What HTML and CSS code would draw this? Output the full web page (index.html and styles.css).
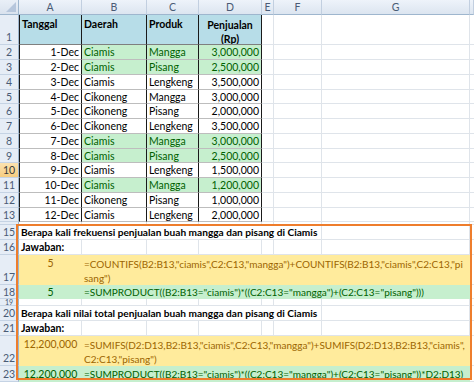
FILE: index.html
```html
<!DOCTYPE html>
<html>
<head>
<meta charset="utf-8">
<link rel="stylesheet" href="styles.css">
</head>
<body>
<div class="sheet">
  <div class="row hdr">
    <div class="corner"><span class="tri"></span></div>
    <div class="ch">A</div><div class="ch">B</div><div class="ch">C</div><div class="ch">D</div><div class="ch">E</div><div class="ch">F</div><div class="ch">G</div><div class="ch"></div>
  </div>

  <div class="row h30">
    <div class="rh bot">1</div>
    <div class="cell tb ta th bold top">Tanggal</div>
    <div class="cell tb th bold top">Daerah</div>
    <div class="cell tb th bold top">Produk</div>
    <div class="cell tb th bold top center wrap">Penjualan<br>(Rp)</div>
    <div class="cell"></div><div class="cell"></div><div class="cell"></div><div class="cell"></div>
  </div>

  <div class="row h15">
    <div class="rh">2</div>
    <div class="cell tb ta right">1-Dec</div><div class="cell tb good">Ciamis</div><div class="cell tb good">Mangga</div><div class="cell tb good right">3,000,000</div>
    <div class="cell"></div><div class="cell"></div><div class="cell"></div><div class="cell"></div>
  </div>
  <div class="row h15">
    <div class="rh">3</div>
    <div class="cell tb ta right">2-Dec</div><div class="cell tb good">Ciamis</div><div class="cell tb good">Pisang</div><div class="cell tb good right">2,500,000</div>
    <div class="cell"></div><div class="cell"></div><div class="cell"></div><div class="cell"></div>
  </div>
  <div class="row h15">
    <div class="rh">4</div>
    <div class="cell tb ta right">3-Dec</div><div class="cell tb">Ciamis</div><div class="cell tb">Lengkeng</div><div class="cell tb right">3,500,000</div>
    <div class="cell"></div><div class="cell"></div><div class="cell"></div><div class="cell"></div>
  </div>
  <div class="row h14">
    <div class="rh">5</div>
    <div class="cell tb ta right">4-Dec</div><div class="cell tb">Cikoneng</div><div class="cell tb">Mangga</div><div class="cell tb right">3,000,000</div>
    <div class="cell"></div><div class="cell"></div><div class="cell"></div><div class="cell"></div>
  </div>
  <div class="row h15">
    <div class="rh">6</div>
    <div class="cell tb ta right">5-Dec</div><div class="cell tb">Cikoneng</div><div class="cell tb">Pisang</div><div class="cell tb right">2,000,000</div>
    <div class="cell"></div><div class="cell"></div><div class="cell"></div><div class="cell"></div>
  </div>
  <div class="row h15">
    <div class="rh">7</div>
    <div class="cell tb ta right">6-Dec</div><div class="cell tb">Cikoneng</div><div class="cell tb">Lengkeng</div><div class="cell tb right">3,500,000</div>
    <div class="cell"></div><div class="cell"></div><div class="cell"></div><div class="cell"></div>
  </div>
  <div class="row h15">
    <div class="rh">8</div>
    <div class="cell tb ta right">7-Dec</div><div class="cell tb good">Ciamis</div><div class="cell tb good">Mangga</div><div class="cell tb good right">3,000,000</div>
    <div class="cell"></div><div class="cell"></div><div class="cell"></div><div class="cell"></div>
  </div>
  <div class="row h14">
    <div class="rh">9</div>
    <div class="cell tb ta right">8-Dec</div><div class="cell tb good">Ciamis</div><div class="cell tb good">Pisang</div><div class="cell tb good right">2,500,000</div>
    <div class="cell"></div><div class="cell"></div><div class="cell"></div><div class="cell"></div>
  </div>
  <div class="row h15">
    <div class="rh active">10</div>
    <div class="cell tb ta right">9-Dec</div><div class="cell tb">Ciamis</div><div class="cell tb">Lengkeng</div><div class="cell tb right">1,500,000</div>
    <div class="cell"></div><div class="cell"></div><div class="cell"></div><div class="cell"></div>
  </div>
  <div class="row h15">
    <div class="rh">11</div>
    <div class="cell tb ta right">10-Dec</div><div class="cell tb good">Ciamis</div><div class="cell tb good">Mangga</div><div class="cell tb good right">1,200,000</div>
    <div class="cell"></div><div class="cell"></div><div class="cell"></div><div class="cell"></div>
  </div>
  <div class="row h15">
    <div class="rh">12</div>
    <div class="cell tb ta right">11-Dec</div><div class="cell tb">Cikoneng</div><div class="cell tb">Pisang</div><div class="cell tb right">1,000,000</div>
    <div class="cell"></div><div class="cell"></div><div class="cell"></div><div class="cell"></div>
  </div>
  <div class="row h14">
    <div class="rh">13</div>
    <div class="cell tb ta right">12-Dec</div><div class="cell tb">Ciamis</div><div class="cell tb">Lengkeng</div><div class="cell tb right">2,000,000</div>
    <div class="cell"></div><div class="cell"></div><div class="cell"></div><div class="cell"></div>
  </div>

  <div class="row h3">
    <div class="rh"></div>
    <div class="cell"></div><div class="cell"></div><div class="cell"></div><div class="cell"></div><div class="cell"></div><div class="cell"></div><div class="cell"></div><div class="cell"></div>
  </div>

  <div class="row h15">
    <div class="rh">15</div>
    <div class="cell span-af bold title">Berapa kali frekuensi penjualan buah mangga dan pisang di Ciamis</div>
    <div class="cell"></div><div class="cell"></div>
  </div>
  <div class="row h15">
    <div class="rh">16</div>
    <div class="cell bold">Jawaban:</div>
    <div class="cell"></div><div class="cell"></div><div class="cell"></div><div class="cell"></div><div class="cell"></div><div class="cell"></div><div class="cell"></div>
  </div>
  <div class="row h30">
    <div class="rh bot">17</div>
    <div class="cell neutral center top plain">5</div>
    <div class="cell neutral span-bg top wrap plain formula">=COUNTIFS(B2:B13,"ciamis",C2:C13,"mangga")+COUNTIFS(B2:B13,"ciamis",C2:C13,"pi<br>sang")</div>
    <div class="cell"></div>
  </div>
  <div class="row h14">
    <div class="rh">18</div>
    <div class="cell goodfill center plain">5</div>
    <div class="cell goodfill span-bg plain formula">=SUMPRODUCT((B2:B13="ciamis")*((C2:C13="mangga")+(C2:C13="pisang")))</div>
    <div class="cell"></div>
  </div>
  <div class="row h7">
    <div class="rh clip">19</div>
    <div class="cell"></div><div class="cell"></div><div class="cell"></div><div class="cell"></div><div class="cell"></div><div class="cell"></div><div class="cell"></div><div class="cell"></div>
  </div>
  <div class="row h15">
    <div class="rh">20</div>
    <div class="cell span-af bold title">Berapa kali nilai total penjualan buah mangga dan pisang di Ciamis</div>
    <div class="cell"></div><div class="cell"></div>
  </div>
  <div class="row h15">
    <div class="rh">21</div>
    <div class="cell bold">Jawaban:</div>
    <div class="cell"></div><div class="cell"></div><div class="cell"></div><div class="cell"></div><div class="cell"></div><div class="cell"></div><div class="cell"></div>
  </div>
  <div class="row h30">
    <div class="rh bot">22</div>
    <div class="cell neutral center top plain">12,200,000</div>
    <div class="cell neutral span-bg top wrap plain formula">=SUMIFS(D2:D13,B2:B13,"ciamis",C2:C13,"mangga")+SUMIFS(D2:D13,B2:B13,"ciamis",<br>C2:C13,"pisang")</div>
    <div class="cell"></div>
  </div>
  <div class="row h16">
    <div class="rh">23</div>
    <div class="cell goodfill center plain">12,200,000</div>
    <div class="cell goodfill span-bg plain formula">=SUMPRODUCT((B2:B13="ciamis")*((C2:C13="mangga")+(C2:C13="pisang"))*D2:D13)</div>
    <div class="cell"></div>
  </div>

  <div class="selection"></div>
</div>
</body>
</html>
```

FILE: styles.css
```css
html, body {
  margin: 0;
  padding: 0;
  background: #ffffff;
}

body {
  font-family: Lato, "Open Sans", "Liberation Sans", sans-serif;
  font-size: 10.5px;
  color: #000;
  overflow: hidden;
}

.sheet {
  position: relative;
  width: 474px;
  height: 382px;
  overflow: hidden;
}

.row {
  display: grid;
  grid-template-columns: 19px 63px 65px 52px 63px 12px 48px 148px 4px;
}

.h3 { height: 3px; }
.h7 { height: 7px; }
.h14 { height: 14px; }
.h15 { height: 15px; }
.h16 { height: 16px; }
.h30 { height: 30px; }

.hdr {
  height: 15px;
}

.corner {
  position: relative;
  box-sizing: border-box;
  background: linear-gradient(#e9eff7, #d9e2ee);
  border-right: 1px solid #9eb6ce;
  border-bottom: 1px solid #9eb6ce;
}

.tri {
  position: absolute;
  right: 2px;
  bottom: 2px;
  width: 0;
  height: 0;
  border-left: 10px solid transparent;
  border-bottom: 10px solid #b6c6dc;
}

.ch {
  box-sizing: border-box;
  background: linear-gradient(#eef3fa, #dce5f0);
  border-right: 1px solid #c2cfe0;
  border-bottom: 1px solid #9eb6ce;
  color: #4a5b75;
  text-align: center;
  line-height: 14px;
  font-size: 10.5px;
}

.rh {
  box-sizing: border-box;
  background: #e6edf6;
  border-right: 1px solid #9eb6ce;
  border-bottom: 1px solid #c5d3e4;
  color: #4a5b75;
  display: flex;
  align-items: center;
  justify-content: center;
  font-size: 10.5px;
  overflow: hidden;
}

.rh.bot {
  align-items: flex-end;
  padding-bottom: 1px;
}

.rh.clip {
  font-size: 7px;
  line-height: 7px;
  align-items: flex-start;
}

.rh.active {
  background: linear-gradient(#fbe2b0, #f6cd80);
  color: #3a3a3a;
}

.cell {
  box-sizing: border-box;
  border-right: 1px solid #dfe4ea;
  border-bottom: 1px solid #dfe4ea;
  display: flex;
  align-items: center;
  padding: 0 2px;
  white-space: nowrap;
  overflow: visible;
  min-width: 0;
}

.tb {
  border-right: 1px solid #1a1a1a;
  border-bottom: 1px solid #bdbdbd;
  overflow: hidden;
}

.ta {
  border-left: 1px solid #1a1a1a;
}

.th {
  background: #b7dde8;
  border-bottom-color: #7f7f7f;
}

.th.top {
  padding-top: 3px;
}

.bold {
  font-weight: 700;
}

.title {
  font-size: 10.15px;
}

.formula {
  font-size: 10px;
}

.top {
  align-items: flex-start;
  padding-top: 2px;
}

.right {
  justify-content: flex-end;
}

.center {
  justify-content: center;
  text-align: center;
}

.wrap {
  line-height: 14px;
  display: block;
}

.good {
  background: #c6efce;
  color: #006100;
}

.goodfill {
  background: #c6efce;
  color: #006100;
}

.neutral {
  background: #ffeb9c;
  color: #9c6500;
}

.plain {
  border-right: none;
  border-bottom: none;
}

.span-af {
  grid-column: 2 / 8;
}

.span-bg {
  grid-column: 3 / 9;
}

.selection {
  position: absolute;
  left: 16px;
  top: 224px;
  width: 456px;
  height: 156px;
  box-sizing: border-box;
  border: 2px solid #ee7d2c;
  pointer-events: none;
}
```
